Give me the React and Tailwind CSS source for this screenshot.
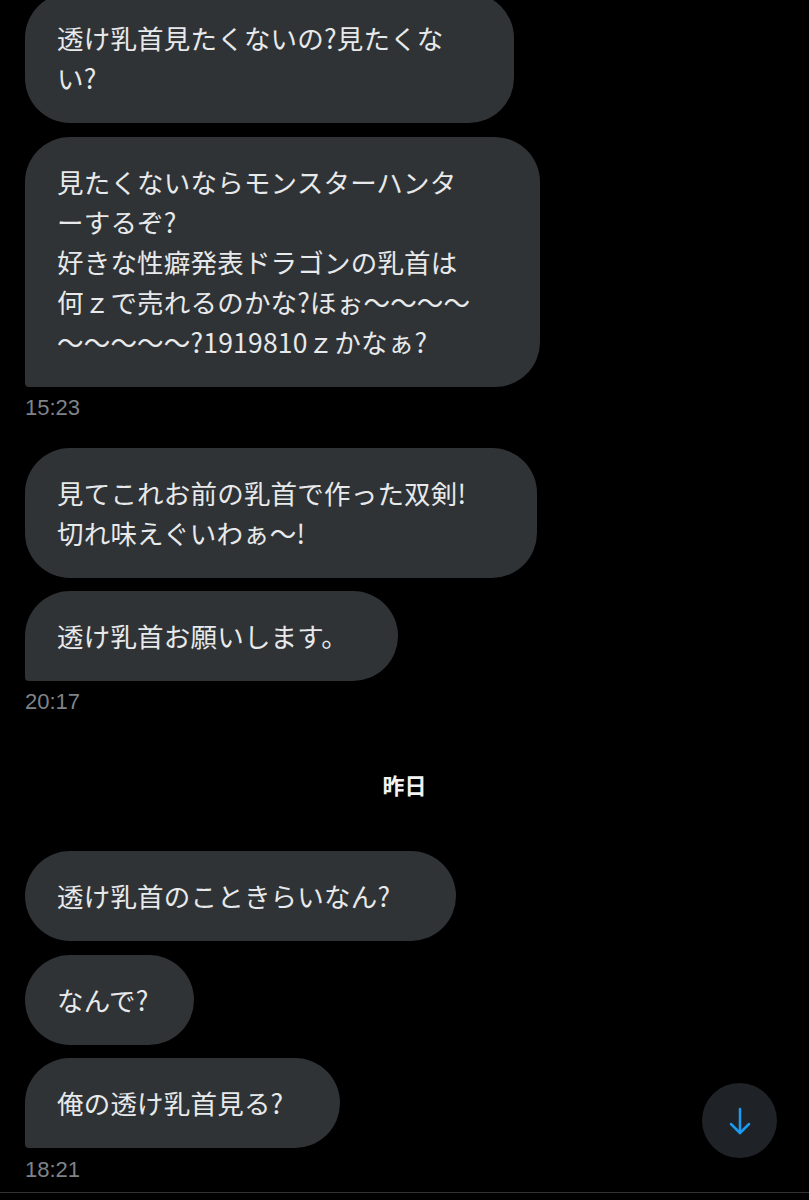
// DM thread, dark theme
const messages = [
  { kind: "bubble", cls: "w-[489px] -mt-[7px]", lines: ["透け乳首見たくないの?見たくな", "い?"] },
  {
    kind: "bubble",
    cls: "w-[515px] mt-[14px] rounded-bl-[4px]",
    lines: [
      "見たくないならモンスターハンタ",
      "ーするぞ?",
      "好きな性癖発表ドラゴンの乳首は",
      "何ｚで売れるのかな?ほぉ〜〜〜〜",
      "〜〜〜〜〜?1919810ｚかなぁ?",
    ],
  },
  { kind: "time", cls: "mt-[7px]", text: "15:23" },
  { kind: "bubble", cls: "w-[512px] mt-[26px]", lines: ["見てこれお前の乳首で作った双剣!", "切れ味えぐいわぁ〜!"] },
  { kind: "bubble", cls: "w-[373px] mt-[13px] rounded-bl-[4px]", lines: ["透け乳首お願いします。"] },
  { kind: "time", cls: "mt-[7px]", text: "20:17" },
  { kind: "day", cls: "mt-[53px]", text: "昨日" },
  { kind: "bubble", cls: "w-[431px] mt-[52px]", lines: ["透け乳首のこときらいなん?"] },
  { kind: "bubble", cls: "w-[169px] mt-[14px]", lines: ["なんで?"] },
  { kind: "bubble", cls: "w-[315px] mt-[13px] rounded-bl-[4px]", lines: ["俺の透け乳首見る?"] },
  { kind: "time", cls: "mt-[8px]", text: "18:21" },
];

const Bubble = ({ cls, lines }) => (
  <div
    className={`bg-[#2f3336] text-[#e7e9ea] rounded-[45px] pl-[32px] py-[25px] text-[26.5px] leading-[40px] whitespace-nowrap tracking-[0.2px] ${cls}`}
  >
    {lines.map((l, i) => (
      <div key={i}>{l}</div>
    ))}
  </div>
);

export default function App() {
  return (
    <div className="w-[809px] h-[1200px] bg-black overflow-hidden relative flex flex-col font-['Noto_Sans_CJK_JP','Noto_Sans',sans-serif]">
      <div className="flex-1 flex flex-col items-start pl-[25px]">
        {messages.map((m, i) => {
          if (m.kind === "bubble") return <Bubble key={i} {...m} />;
          if (m.kind === "time")
            return (
              <div
                key={i}
                className={`text-[#7f8388] text-[22px] leading-[28px] font-['Liberation_Sans',sans-serif] ${m.cls}`}
              >
                {m.text}
              </div>
            );
          return (
            <div
              key={i}
              className={`self-stretch -ml-[25px] text-center text-[#f2f2f2] font-semibold text-[22px] leading-[30px] ${m.cls}`}
            >
              {m.text}
            </div>
          );
        })}
      </div>
      <div className="h-[8px] border-t border-[#2f3336]" />

      <button className="absolute left-[702px] top-[1083px] w-[75px] h-[75px] rounded-full bg-[#1f2226] flex items-center justify-center">
        <svg width="24" height="28" viewBox="0 0 24 28" fill="none" stroke="#1d9bf0" strokeWidth="2.5" strokeLinecap="round" strokeLinejoin="round">
          <path d="M12 2v24" />
          <path d="M3 17l9 9 9-9" />
        </svg>
      </button>
    </div>
  );
}
